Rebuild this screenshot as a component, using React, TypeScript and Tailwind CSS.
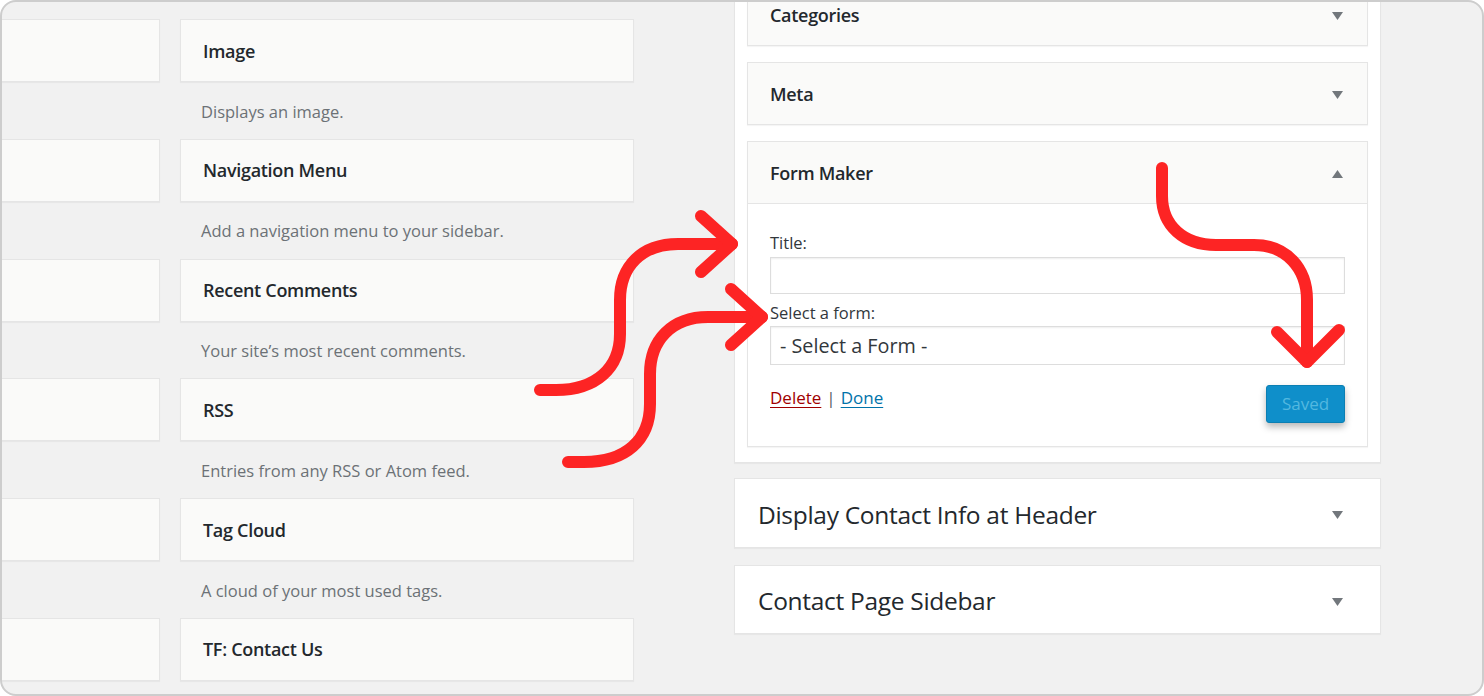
import React from "react";

const available = [
  { title: "Image", desc: "Displays an image." },
  { title: "Navigation Menu", desc: "Add a navigation menu to your sidebar." },
  { title: "Recent Comments", desc: "Your site\u2019s most recent comments." },
  { title: "RSS", desc: "Entries from any RSS or Atom feed." },
  { title: "Tag Cloud", desc: "A cloud of your most used tags." },
  { title: "TF: Contact Us", desc: "" },
];

function Caret({ up = false }: { up?: boolean }) {
  return (
    <svg width="11" height="8" viewBox="0 0 11 8" className="shrink-0">
      {up ? (
        <path d="M0 8 L5.5 0 L11 8 Z" fill="#72777c" />
      ) : (
        <path d="M0 0 L11 0 L5.5 8 Z" fill="#72777c" />
      )}
    </svg>
  );
}

function WidgetCard({ title }: { title?: string }) {
  return (
    <div className="h-[63px] bg-[#fafaf9] border border-[#e5e5e5] shadow-[0_1px_1px_rgba(0,0,0,0.04)] flex items-center pl-[22px] pt-[1px]">
      {title && (
        <span className="text-[18px] font-semibold text-[#23282d] tracking-[-0.3px]">{title}</span>
      )}
    </div>
  );
}

function SidebarWidget({ title }: { title: string }) {
  return (
    <div className="h-[63px] bg-[#fafaf9] border border-[#e5e5e5] shadow-[0_1px_1px_rgba(0,0,0,0.04)] flex items-center justify-between pl-[22px] pr-[24px] pt-[2px]">
      <span className="text-[18px] font-semibold text-[#23282d] tracking-[-0.3px]">{title}</span>
      <Caret />
    </div>
  );
}

function SidebarArea({ title }: { title: string }) {
  return (
    <div className="bg-white border border-[#e5e5e5] shadow-[0_1px_1px_rgba(0,0,0,0.04)] flex items-center justify-between pl-[23px] pr-[37px] pt-[4px]">
      <span className="text-[24.5px] text-[#23282d] tracking-[-0.3px]">{title}</span>
      <Caret />
    </div>
  );
}

function FormMaker() {
  return (
    <div className="border border-[#e5e5e5] shadow-[0_1px_1px_rgba(0,0,0,0.04)]">
      <div className="h-[62px] bg-[#fafaf9] border-b border-[#e5e5e5] flex items-center justify-between pl-[22px] pr-[24px] pt-[2px]">
        <span className="text-[18px] font-semibold text-[#23282d] tracking-[-0.3px]">Form Maker</span>
        <Caret up />
      </div>
      <div className="bg-white h-[242px] pt-[27px] pl-[22px] pr-[22px]">
        <div className="h-[24px] leading-[24px] text-[16.5px] text-[#32373c]">Title:</div>
        <div className="mt-[2px] h-[37px] border border-[#dddddd] shadow-[inset_0_1px_2px_rgba(0,0,0,0.07)] bg-white" />
        <div className="mt-[7px] h-[24px] leading-[24px] text-[16.5px] text-[#32373c]">Select a form:</div>
        <div className="mt-[1px] h-[39px] border border-[#dddddd] shadow-[inset_0_1px_2px_rgba(0,0,0,0.07)] bg-white flex items-center justify-between pl-[9px] pr-[12px]">
          <span className="text-[19.8px] text-[#32373c]">- Select a Form -</span>
          <svg width="10" height="6" viewBox="0 0 10 6">
            <path d="M0 0 L10 0 L5 6 Z" fill="#555d66" />
          </svg>
        </div>
        <div className="mt-[20px] flex items-start justify-between">
          <div className="pt-[1px] text-[17px] leading-[24px] text-[#555d66]">
            <span className="text-[#a00000] underline underline-offset-[3px]">Delete</span>
            <span className="mx-[5px]">|</span>
            <span className="text-[#0073aa] underline underline-offset-[3px]">Done</span>
          </div>
          <div className="w-[79px] h-[38px] rounded-[3px] bg-[#0f8fca] border border-[#0b7fb3] shadow-[0_4px_7px_rgba(0,0,0,0.28)] flex items-center justify-center text-[17px] text-[#53b8e0]">
            Saved
          </div>
        </div>
      </div>
    </div>
  );
}

function Arrows() {
  const red = "#fd2424";
  return (
    <svg
      width="1484"
      height="696"
      viewBox="0 0 1484 696"
      className="absolute left-0 top-0 pointer-events-none"
      fill="none"
      stroke={red}
      strokeWidth="12"
      strokeLinecap="round"
      strokeLinejoin="round"
    >
      <path d="M540 390 L556 390 C596 390 620 368 620 334 L620 300 C620 266 642 244 678 244 L732 244" />
      <path d="M701 216 L732 244 L701 272" />
      <path d="M568 462 L584 462 C626 462 650 440 650 404 L650 374 C650 340 672 317 708 317 L762 317" />
      <path d="M731 289 L762 317 L731 345" />
      <path d="M1162 168 L1162 196 C1162 226 1184 245 1216 245 L1254 245 C1286 245 1307 268 1307 300 L1307 362" />
      <path d="M1277 332 L1307 362 L1339 330" />
    </svg>
  );
}

export default function App() {
  return (
    <div className="relative w-[1484px] h-[696px] bg-white font-['Open_Sans','Noto_Sans',sans-serif]">
      <div className="w-full h-full rounded-[16px] border-2 border-[#cdcdcd] bg-[#f1f1f1] overflow-hidden flex">
        {/* Available widgets */}
        <div className="ml-[-296px] pt-[17px] grid grid-cols-[454px_454px] gap-x-[20px] content-start shrink-0">
          {available.map((w) => (
            <React.Fragment key={w.title}>
              <div className="h-[119.8px]">
                <WidgetCard />
              </div>
              <div className="h-[119.8px]">
                <WidgetCard title={w.title} />
                <div className="h-[57px] flex items-center pl-[21px] pt-[3px] text-[16.5px] text-[#6c7176]">
                  {w.desc}
                </div>
              </div>
            </React.Fragment>
          ))}
        </div>

        {/* Sidebars */}
        <div className="ml-[100px] mt-[-32px] w-[647px] shrink-0 flex flex-col items-stretch">
          <div className="shrink-0 bg-white border border-[#e5e5e5] shadow-[0_1px_1px_rgba(0,0,0,0.04)] pt-[12px] px-[12px] pb-[15px] flex flex-col gap-[16px]">
            <SidebarWidget title="Categories" />
            <SidebarWidget title="Meta" />
            <FormMaker />
          </div>
          <div className="mt-[15px] h-[70px] shrink-0 flex flex-col [&>div]:flex-1">
            <SidebarArea title="Display Contact Info at Header" />
          </div>
          <div className="mt-[17px] h-[69px] shrink-0 flex flex-col [&>div]:flex-1">
            <SidebarArea title="Contact Page Sidebar" />
          </div>
        </div>
      </div>
      <Arrows />
    </div>
  );
}
